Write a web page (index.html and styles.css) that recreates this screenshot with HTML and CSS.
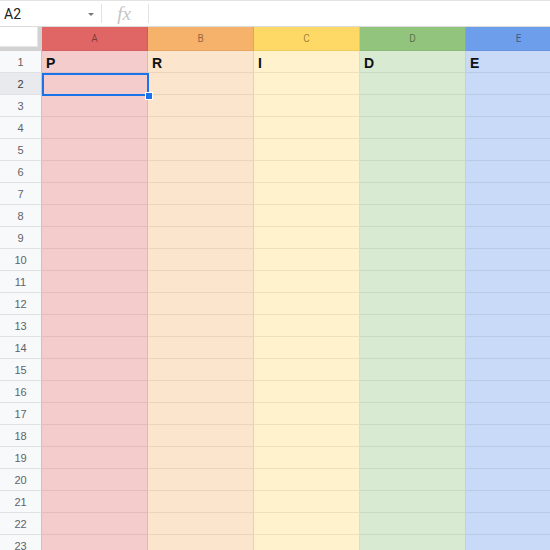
FILE: index.html
```html
<!DOCTYPE html>
<html>
<head>
<meta charset="utf-8">
<link rel="stylesheet" href="styles.css">
</head>
<body>
<div class="app">
  <div class="fbar">
    <div class="namebox"><span class="ref">A2</span><span class="caret"></span></div>
    <div class="sep"></div>
    <div class="fx">fx</div>
    <div class="sep"></div>
    <div class="input"></div>
  </div>
  <div class="sheet">
    <div class="corner"></div>
    <div class="ch a">A</div><div class="ch b">B</div><div class="ch c">C</div><div class="ch d">D</div><div class="ch e">E</div>

    <div class="rh">1</div><div class="cell a">P</div><div class="cell b">R</div><div class="cell c">I</div><div class="cell d">D</div><div class="cell e">E</div>
    <div class="rh active">2</div><div class="cell a"></div><div class="cell b"></div><div class="cell c"></div><div class="cell d"></div><div class="cell e"></div>
    <div class="rh">3</div><div class="cell a"></div><div class="cell b"></div><div class="cell c"></div><div class="cell d"></div><div class="cell e"></div>
    <div class="rh">4</div><div class="cell a"></div><div class="cell b"></div><div class="cell c"></div><div class="cell d"></div><div class="cell e"></div>
    <div class="rh">5</div><div class="cell a"></div><div class="cell b"></div><div class="cell c"></div><div class="cell d"></div><div class="cell e"></div>
    <div class="rh">6</div><div class="cell a"></div><div class="cell b"></div><div class="cell c"></div><div class="cell d"></div><div class="cell e"></div>
    <div class="rh">7</div><div class="cell a"></div><div class="cell b"></div><div class="cell c"></div><div class="cell d"></div><div class="cell e"></div>
    <div class="rh">8</div><div class="cell a"></div><div class="cell b"></div><div class="cell c"></div><div class="cell d"></div><div class="cell e"></div>
    <div class="rh">9</div><div class="cell a"></div><div class="cell b"></div><div class="cell c"></div><div class="cell d"></div><div class="cell e"></div>
    <div class="rh">10</div><div class="cell a"></div><div class="cell b"></div><div class="cell c"></div><div class="cell d"></div><div class="cell e"></div>
    <div class="rh">11</div><div class="cell a"></div><div class="cell b"></div><div class="cell c"></div><div class="cell d"></div><div class="cell e"></div>
    <div class="rh">12</div><div class="cell a"></div><div class="cell b"></div><div class="cell c"></div><div class="cell d"></div><div class="cell e"></div>
    <div class="rh">13</div><div class="cell a"></div><div class="cell b"></div><div class="cell c"></div><div class="cell d"></div><div class="cell e"></div>
    <div class="rh">14</div><div class="cell a"></div><div class="cell b"></div><div class="cell c"></div><div class="cell d"></div><div class="cell e"></div>
    <div class="rh">15</div><div class="cell a"></div><div class="cell b"></div><div class="cell c"></div><div class="cell d"></div><div class="cell e"></div>
    <div class="rh">16</div><div class="cell a"></div><div class="cell b"></div><div class="cell c"></div><div class="cell d"></div><div class="cell e"></div>
    <div class="rh">17</div><div class="cell a"></div><div class="cell b"></div><div class="cell c"></div><div class="cell d"></div><div class="cell e"></div>
    <div class="rh">18</div><div class="cell a"></div><div class="cell b"></div><div class="cell c"></div><div class="cell d"></div><div class="cell e"></div>
    <div class="rh">19</div><div class="cell a"></div><div class="cell b"></div><div class="cell c"></div><div class="cell d"></div><div class="cell e"></div>
    <div class="rh">20</div><div class="cell a"></div><div class="cell b"></div><div class="cell c"></div><div class="cell d"></div><div class="cell e"></div>
    <div class="rh">21</div><div class="cell a"></div><div class="cell b"></div><div class="cell c"></div><div class="cell d"></div><div class="cell e"></div>
    <div class="rh">22</div><div class="cell a"></div><div class="cell b"></div><div class="cell c"></div><div class="cell d"></div><div class="cell e"></div>
    <div class="rh">23</div><div class="cell a"></div><div class="cell b"></div><div class="cell c"></div><div class="cell d"></div><div class="cell e"></div>

    <div class="sel"><span class="handle"></span></div>
  </div>
</div>
</body>
</html>
```

FILE: styles.css
```css
* { box-sizing: border-box; }
html, body { margin: 0; padding: 0; background: #fff; }
body { font-family: "Liberation Sans", Arial, sans-serif; }

.app { width: 550px; height: 550px; overflow: hidden; }

.fbar {
  display: flex;
  align-items: center;
  height: 27px;
  border-top: 1px solid #e3e3e3;
  border-bottom: 1px solid #dcdcdc;
}
.namebox {
  width: 101px;
  display: flex;
  align-items: center;
  justify-content: space-between;
  padding: 0 7px 0 4px;
}
.ref { font-family: Roboto, "Liberation Sans", sans-serif; font-size: 14px; color: #202124; }
.caret {
  width: 0; height: 0;
  border-left: 3px solid transparent;
  border-right: 3px solid transparent;
  border-top: 3px solid #777;
  margin-top: 1px;
}
.sep { width: 1px; height: 19px; background: #e3e3e3; }
.fx {
  width: 46px;
  text-align: center;
  font-family: "Liberation Serif", serif;
  font-style: italic;
  font-size: 19px;
  color: #c4c4c4;
  line-height: 20px;
  padding-right: 2px;
}
.input { flex: 1; }

.sheet {
  position: relative;
  display: grid;
  grid-template-columns: 42px repeat(5, 106px);
  grid-template-rows: 24px repeat(23, 22px);
  width: 572px;
}

.corner {
  background: #fff;
  border-right: 4px solid #d2d2d2;
  border-bottom: 4px solid #d2d2d2;
  box-shadow: inset -1px -1px 0 #e6e6e6;
}

.ch {
  display: flex;
  align-items: center;
  justify-content: center;
  font-family: Roboto, "Liberation Sans", sans-serif;
  font-size: 10px;
  color: rgba(0, 0, 0, 0.45);
  border-right: 1px solid rgba(0, 0, 0, 0.08);
  border-bottom: 1px solid rgba(0, 0, 0, 0.06);
}
.ch.a { background: #e06666; }
.ch.b { background: #f6b26b; }
.ch.c { background: #ffd966; }
.ch.d { background: #93c47d; }
.ch.e { background: #6d9eeb; }

.rh {
  display: flex;
  align-items: center;
  justify-content: center;
  background: #f8f9fa;
  border-right: 1px solid #c4c4c4;
  border-bottom: 1px solid #dfe1e3;
  font-size: 11px;
  color: #5f6368;
  padding-top: 1px;
}
.rh.active { background: #e8eaed; color: #3c4043; }

.cell {
  border-right: 1px solid rgba(0, 0, 0, 0.09);
  border-bottom: 1px solid rgba(0, 0, 0, 0.07);
  font-weight: bold;
  font-size: 14px;
  color: #111;
  padding: 4px 0 0 4px;
  line-height: 16px;
}
.cell.a { background: #f4cccc; }
.cell.b { background: #fce5cd; }
.cell.c { background: #fff2cc; }
.cell.d { background: #d9ead3; }
.cell.e { background: #c9daf8; }

.sel {
  position: absolute;
  left: 42px;
  top: 46px;
  width: 107px;
  height: 23px;
  border: 2px solid #1a73e8;
}
.handle {
  position: absolute;
  right: -6px;
  bottom: -6px;
  width: 8px;
  height: 8px;
  background: #1a73e8;
  border: 1px solid #fff;
}
```
